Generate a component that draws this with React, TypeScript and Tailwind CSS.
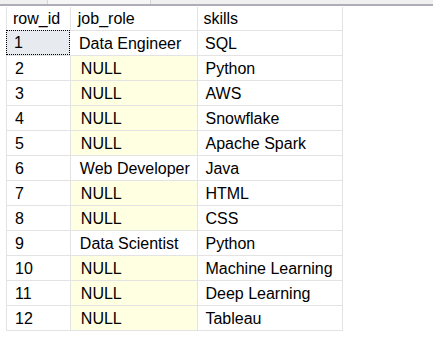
const rows: [string, string | null, string][] = [
  ["1", "Data Engineer", "SQL"],
  ["2", null, "Python"],
  ["3", null, "AWS"],
  ["4", null, "Snowflake"],
  ["5", null, "Apache Spark"],
  ["6", "Web Developer", "Java"],
  ["7", null, "HTML"],
  ["8", null, "CSS"],
  ["9", "Data Scientist", "Python"],
  ["10", null, "Machine Learning"],
  ["11", null, "Deep Learning"],
  ["12", null, "Tableau"],
];

export default function App() {
  return (
    <div
      className="w-[433px] h-[348px] bg-white text-[16px] text-black overflow-hidden"
      style={{ fontFamily: '"Liberation Sans", Arial, sans-serif' }}
    >
      {/* tab strip, mostly scrolled off */}
      <div className="flex h-[6px] bg-[#f0f0f0] border-b-2 border-[#aeaeb6]">
        <div className="w-[47px]" />
        <div className="w-[104px] bg-[#f6f6f6] border-x border-[#d6d6d6]" />
        <div className="flex-1" />
      </div>

      <div className="ml-[6px] mt-[1px] w-[337px]">
        {/* header */}
        <div className="flex h-[24px] border-b border-l border-[#e3e3e3] leading-[23px]">
          <div className="w-[64px] pl-[6px] border-r border-[#e3e3e3]">row_id</div>
          <div className="w-[128px] pl-[7px] border-r border-[#e3e3e3]">job_role</div>
          <div className="w-[145px] pl-[5px] border-r border-[#e3e3e3]">skills</div>
        </div>

        {rows.map(([id, role, skill], i) => (
          <div key={id} className="flex h-[25px] border-b border-l border-[#e3e3e3] leading-[25px]">
            <div
              className={
                i === 0
                  ? "w-[64px] pl-[7px] bg-[#e7ebef] border border-dotted border-black -mt-px -ml-px h-[25px] leading-[23px]"
                  : "w-[64px] pl-[8px] border-r border-[#e3e3e3]"
              }
            >
              {id}
            </div>
            <div
              className={
                role === null
                  ? "w-[128px] pl-[10px] bg-[#ffffe1] border-r border-[#e3e3e3]"
                  : "w-[128px] pl-[9px] border-r border-[#e3e3e3]"
              }
            >
              {role ?? "NULL"}
            </div>
            <div className="w-[145px] pl-[7px] border-r border-[#e3e3e3]">{skill}</div>
          </div>
        ))}
      </div>
    </div>
  );
}
